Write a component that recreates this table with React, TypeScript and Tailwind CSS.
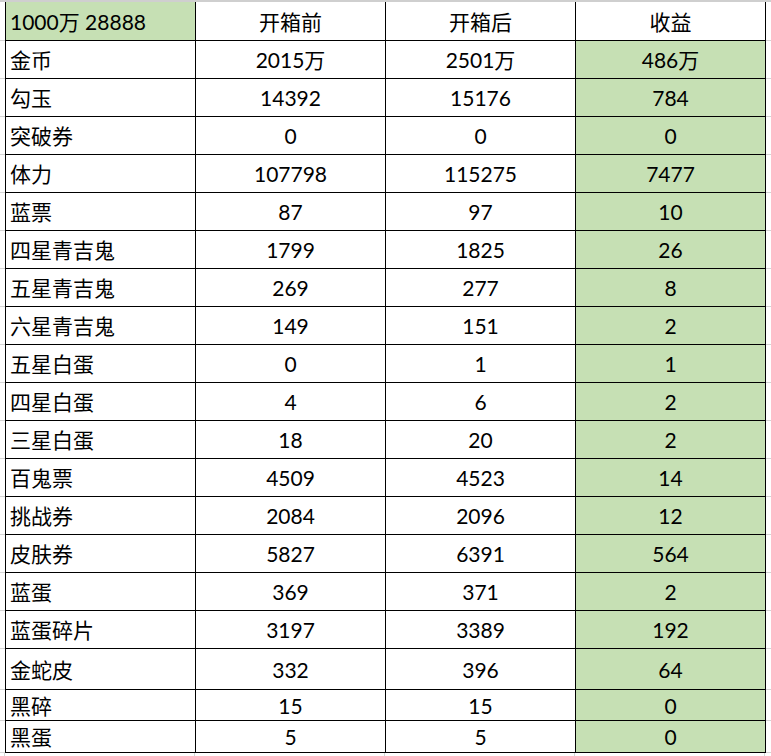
const rows: { name: string; before: string; after: string; gain: string; h: string }[] = [
  { name: '金币', before: '2015万', after: '2501万', gain: '486万', h: 'h-[38px]' },
  { name: '勾玉', before: '14392', after: '15176', gain: '784', h: 'h-[38px]' },
  { name: '突破券', before: '0', after: '0', gain: '0', h: 'h-[38px]' },
  { name: '体力', before: '107798', after: '115275', gain: '7477', h: 'h-[38px]' },
  { name: '蓝票', before: '87', after: '97', gain: '10', h: 'h-[38px]' },
  { name: '四星青吉鬼', before: '1799', after: '1825', gain: '26', h: 'h-[38px]' },
  { name: '五星青吉鬼', before: '269', after: '277', gain: '8', h: 'h-[38px]' },
  { name: '六星青吉鬼', before: '149', after: '151', gain: '2', h: 'h-[38px]' },
  { name: '五星白蛋', before: '0', after: '1', gain: '1', h: 'h-[38px]' },
  { name: '四星白蛋', before: '4', after: '6', gain: '2', h: 'h-[38px]' },
  { name: '三星白蛋', before: '18', after: '20', gain: '2', h: 'h-[38px]' },
  { name: '百鬼票', before: '4509', after: '4523', gain: '14', h: 'h-[38px]' },
  { name: '挑战券', before: '2084', after: '2096', gain: '12', h: 'h-[38px]' },
  { name: '皮肤券', before: '5827', after: '6391', gain: '564', h: 'h-[38px]' },
  { name: '蓝蛋', before: '369', after: '371', gain: '2', h: 'h-[38px]' },
  { name: '蓝蛋碎片', before: '3197', after: '3389', gain: '192', h: 'h-[38px]' },
  { name: '金蛇皮', before: '332', after: '396', gain: '64', h: 'h-[41px]' },
  { name: '黑碎', before: '15', after: '15', gain: '0', h: 'h-[31px]' },
  { name: '黑蛋', before: '5', after: '5', gain: '0', h: 'h-[32px]' },
]

const font = "font-['Lato','Noto_Sans_CJK_SC',sans-serif]"

function Row({
  cells,
  h,
  firstGreen,
  lastGreen,
}: {
  cells: string[]
  h: string
  firstGreen?: boolean
  lastGreen?: boolean
}) {
  return (
    <div className={`flex ${h}`}>
      <div className="w-[5px] shrink-0 border-b border-[#d4d4d4]" />
      <div
        className={`flex w-[191px] shrink-0 items-center border-b border-l border-r border-black pl-[4px] ${
          firstGreen ? 'bg-[#c6e0b4]' : 'bg-white'
        }`}
      >
        {cells[0]}
      </div>
      <div className="flex w-[190px] shrink-0 items-center justify-center border-b border-r border-black">
        {cells[1]}
      </div>
      <div className="flex w-[190px] shrink-0 items-center justify-center border-b border-r border-black">
        {cells[2]}
      </div>
      <div
        className={`flex w-[190px] shrink-0 items-center justify-center border-b border-r border-black ${
          lastGreen ? 'bg-[#c6e0b4]' : 'bg-white'
        }`}
      >
        {cells[3]}
      </div>
      <div className="flex-1 border-b border-[#d4d4d4]" />
    </div>
  )
}

export default function App() {
  return (
    <div className={`h-[756px] w-[771px] overflow-hidden bg-white text-[21px] leading-none text-black ${font}`}>
      <div className="h-[2px] bg-[#cfcfcf]" />
      <Row cells={['1000万 28888', '开箱前', '开箱后', '收益']} h="h-[39px]" firstGreen />
      {rows.map((r) => (
        <Row key={r.name} cells={[r.name, r.before, r.after, r.gain]} h={r.h} lastGreen />
      ))}
      <div className="flex h-[4px]">
        <div className="w-[5px] shrink-0 border-r border-[#d4d4d4]" />
        <div className="w-[190px] shrink-0 border-r border-[#d4d4d4]" />
        <div className="w-[190px] shrink-0 border-r border-[#d4d4d4]" />
        <div className="w-[190px] shrink-0 border-r border-[#d4d4d4]" />
        <div className="w-[190px] shrink-0 border-r border-[#d4d4d4]" />
      </div>
    </div>
  )
}
